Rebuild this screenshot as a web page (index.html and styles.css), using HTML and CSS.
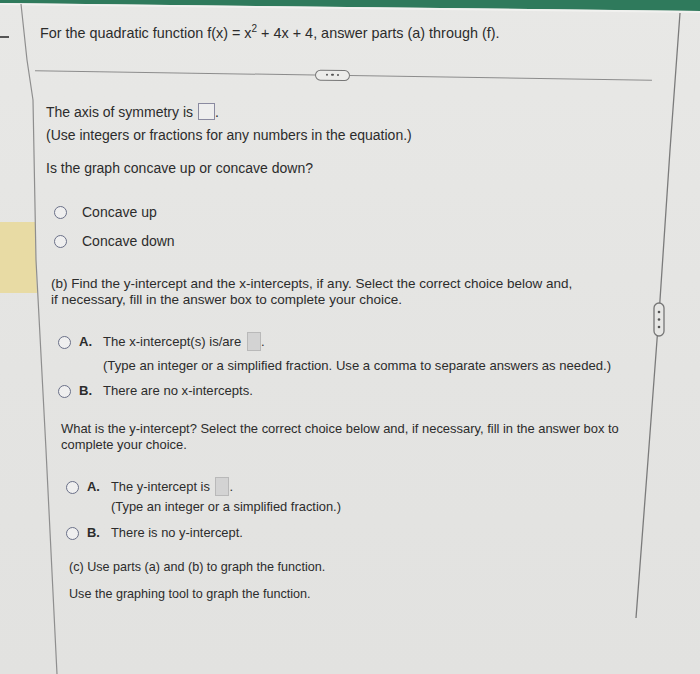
FILE: index.html
```html
<!DOCTYPE html>
<html lang="en">
<head>
<meta charset="utf-8">
<title>Quadratic function</title>
<link rel="stylesheet" href="styles.css">
</head>
<body>
<svg class="backdrop" width="700" height="674" viewBox="0 0 700 674" aria-hidden="true">
  <polygon points="0,0 700,0 700,11 0,3" fill="#2f7a5c"/>
  <polyline points="0,4 700,12" fill="none" stroke="#f1f1ef" stroke-width="2"/>
  <polygon points="0,222 35,222 37,293 0,293" fill="#e8dba4"/>
  <polyline points="21,4 27,60 33,100 36,260 46,450 57,674" fill="none" stroke="#8e8e8e" stroke-width="1.2"/>
  <rect x="0" y="36" width="9" height="2" fill="#555"/>
  <polyline points="680,13 670,150 660,300 648,460 636,618" fill="none" stroke="#7b7b7b" stroke-width="1.3"/>
  <rect x="654" y="303" width="10" height="33" rx="5" fill="#e6e6e4" stroke="#767676" stroke-width="1.3"/>
  <circle cx="659" cy="312" r="1.3" fill="#555"/>
  <circle cx="659" cy="319.5" r="1.3" fill="#555"/>
  <circle cx="659" cy="327" r="1.3" fill="#555"/>
</svg>
<main class="page">
  <h1 class="prompt">For the quadratic function f(x) = x<sup>2</sup> + 4x + 4, answer parts (a) through (f).</h1>
  <div class="divider">
    <span class="rule rule-left"></span>
    <span class="more"><i></i><i></i><i></i></span>
    <span class="rule rule-right"></span>
  </div>

  <section class="part part-a">
    <p class="line">The axis of symmetry is <span class="box box-open"></span>.</p>
    <p class="line hint">(Use integers or fractions for any numbers in the equation.)</p>
    <p class="line ask">Is the graph concave up or concave down?</p>
    <ul class="options">
      <li class="option"><span class="radio"></span>Concave up</li>
      <li class="option option-down"><span class="radio"></span>Concave down</li>
    </ul>
  </section>

  <section class="part part-b">
    <p class="para">(b) Find the y-intercept and the x-intercepts, if any. Select the correct choice below and,<br>if necessary, fill in the answer box to complete your choice.</p>
    <div class="choices">
      <div class="choice">
        <span class="radio"></span>
        <span class="letter">A.</span>
        <div class="choice-body">
          <div class="choice-text">The x-intercept(s) is/are <span class="box box-filled"></span>.</div>
          <div class="choice-hint">(Type an integer or a simplified fraction. Use a comma to separate answers as needed.)</div>
        </div>
      </div>
      <div class="choice choice-next">
        <span class="radio"></span>
        <span class="letter">B.</span>
        <div class="choice-body">
          <div class="choice-text">There are no x-intercepts.</div>
        </div>
      </div>
    </div>
  </section>

  <section class="part part-y">
    <p class="para">What is the y-intercept? Select the correct choice below and, if necessary, fill in the answer box to<br>complete your choice.</p>
    <div class="choices">
      <div class="choice">
        <span class="radio"></span>
        <span class="letter">A.</span>
        <div class="choice-body">
          <div class="choice-text">The y-intercept is <span class="box box-filled"></span>.</div>
          <div class="choice-hint">(Type an integer or a simplified fraction.)</div>
        </div>
      </div>
      <div class="choice choice-next">
        <span class="radio"></span>
        <span class="letter">B.</span>
        <div class="choice-body">
          <div class="choice-text">There is no y-intercept.</div>
        </div>
      </div>
    </div>
  </section>

  <section class="part part-c">
    <p class="line">(c) Use parts (a) and (b) to graph the function.</p>
    <p class="line tool">Use the graphing tool to graph the function.</p>
  </section>
</main>
</body>
</html>
```

FILE: styles.css
```css
html, body {
  margin: 0;
  padding: 0;
}

body {
  position: relative;
  width: 700px;
  height: 674px;
  overflow: hidden;
  background: linear-gradient(180deg, #e8e8e6 0%, #e4e4e2 55%, #e2e2e0 100%);
  font-family: "Liberation Sans", Arial, sans-serif;
  color: #2c2c2c;
}

.backdrop {
  position: absolute;
  top: 0;
  left: 0;
}

.page {
  position: relative;
  z-index: 1;
}

.prompt {
  margin: 0;
  padding: 24px 0 0 40px;
  font-size: 14.4px;
  line-height: 18px;
  font-weight: normal;
}

.prompt sup {
  font-size: 10px;
  line-height: 0;
  vertical-align: 6px;
}

.divider {
  display: flex;
  align-items: center;
  width: 617px;
  height: 12px;
  margin: 27px 0 0 35px;
  transform: rotate(0.9deg);
}

.rule {
  height: 1px;
  background: #8c8c8c;
}

.rule-left {
  width: 280px;
}

.rule-right {
  flex: 1;
}

.more {
  box-sizing: border-box;
  display: flex;
  align-items: center;
  justify-content: center;
  gap: 3px;
  width: 35px;
  height: 11px;
  border: 1.5px solid #777;
  border-radius: 6px;
  background: #ececea;
}

.more i {
  width: 2.5px;
  height: 2.5px;
  border-radius: 50%;
  background: #555;
}

.part p {
  margin: 0;
}

.line {
  font-size: 14px;
  line-height: 20px;
}

.part-a {
  margin-top: 21px;
  padding-left: 46px;
}

.part-a .hint {
  margin-top: 3px;
}

.part-a .ask {
  margin-top: 13px;
}

.box {
  display: inline-block;
  box-sizing: border-box;
  vertical-align: middle;
}

.box-open {
  width: 17px;
  height: 17px;
  margin-left: 1px;
  margin-top: -3px;
  border: 1.5px solid #8a8aa0;
  background: #eeeeee;
}

.box-filled {
  width: 14px;
  height: 19px;
  margin-left: 2px;
  margin-top: -3px;
  border: 1px solid #b9b9b9;
  background: #d3d3d3;
}

.options {
  list-style: none;
  margin: 24px 0 0;
  padding: 0;
}

.option {
  display: flex;
  align-items: center;
  height: 20px;
  font-size: 14px;
  line-height: 20px;
}

.option-down {
  margin-top: 9px;
}

.radio {
  box-sizing: border-box;
  flex: none;
  width: 13px;
  height: 13px;
  border: 1.7px solid #6a7088;
  border-radius: 50%;
  background: #efefef;
}

.option .radio {
  margin: 0 15px 0 8px;
}

.para {
  font-size: 13.5px;
  line-height: 16px;
}

.part-b {
  margin-top: 25px;
  padding-left: 51px;
}

.choices {
  margin-top: 24px;
}

.part-b .choices {
  padding-left: 7px;
}

.choice {
  display: grid;
  grid-template-columns: 13px 16px auto;
  column-gap: 8px;
  align-items: start;
  font-size: 13.1px;
}

.choice .radio {
  margin-top: 3.5px;
}

.letter {
  font-weight: bold;
  line-height: 20px;
}

.choice-text {
  line-height: 20px;
}

.choice-hint {
  margin-top: 5px;
  line-height: 18px;
}

.choice-next {
  margin-top: 6px;
}

.part-y {
  margin-top: 20px;
  padding-left: 61px;
}

.part-y .para {
  font-size: 12.95px;
}

.part-y .choice {
  font-size: 12.9px;
}

.part-y .choices {
  padding-left: 5px;
}

.part-y .choice-hint {
  margin-top: 1px;
}

.part-y .choice-next {
  margin-top: 7px;
}

.part-c {
  margin-top: 15px;
  padding-left: 69px;
}

.part-c .line {
  font-size: 12.6px;
  line-height: 18px;
}

.part-c .tool {
  margin-top: 9px;
}
```
